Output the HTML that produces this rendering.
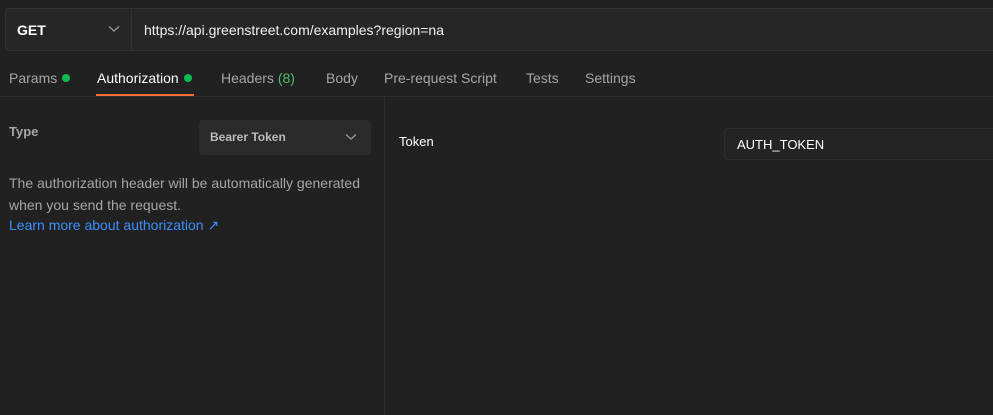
<!DOCTYPE html>
<html><head><style>
body{margin:0;width:993px;height:415px;background:#212121;font-family:"Liberation Sans",sans-serif;position:relative;overflow:hidden;color:#e6e6e6}
.a{position:absolute}
.url{left:5px;top:8px;width:1000px;height:43px;border:1px solid #333;border-radius:4px;background:#262626;box-sizing:border-box}
.tab{top:70px;font-size:14px;color:#a6a6a6}
.dot{display:inline-block;width:8px;height:8px;border-radius:50%;background:#0cbb52;margin-left:5px;vertical-align:1px}
</style></head><body>
<div class="a url"></div>
<div class="a" style="left:131px;top:9px;width:1px;height:41px;background:#333"></div>
<div class="a" style="left:17px;top:22px;font-size:14px;font-weight:bold;color:#fff">GET</div>
<svg class="a" style="left:108px;top:25px" width="12" height="8"><path d="M1 1.5L6 6L11 1.5" stroke="#999" stroke-width="1.3" fill="none"/></svg>
<div class="a" style="left:144px;top:22px;font-size:14px;color:#f0f0f0">https://api.greenstreet.com/examples?region=na</div>
<div class="a tab" style="left:9px">Params<span class="dot"></span></div>
<div class="a tab" style="left:97px;color:#fff">Authorization<span class="dot"></span></div>
<div class="a tab" style="left:221px">Headers <span style="color:#4fc068">(8)</span></div>
<div class="a tab" style="left:326px">Body</div>
<div class="a tab" style="left:384px">Pre-request Script</div>
<div class="a tab" style="left:526px">Tests</div>
<div class="a tab" style="left:585px">Settings</div>
<div class="a" style="left:96px;top:94px;width:98px;height:2px;background:#ff6c37"></div>
<div class="a" style="left:0;top:96px;width:993px;height:1px;background:#2f2f2f"></div>
<div class="a" style="left:384px;top:97px;width:1px;height:318px;background:#2f2f2f"></div>
<div class="a" style="left:9px;top:124px;font-size:13px;font-weight:bold;color:#a6a6a6">Type</div>
<div class="a" style="left:199px;top:120px;width:172px;height:35px;background:#2b2b2b;border-radius:4px"></div>
<div class="a" style="left:210px;top:130px;font-size:12px;font-weight:bold;color:#bbb">Bearer Token</div>
<svg class="a" style="left:345px;top:133px" width="12" height="8"><path d="M1 1.5L6 6L11 1.5" stroke="#999" stroke-width="1.3" fill="none"/></svg>
<div class="a" style="left:9px;top:172px;font-size:14px;line-height:22px;color:#a6a6a6;width:375px">The authorization header will be automatically generated<br>when you send the request.</div>
<div class="a" style="left:9px;top:217px;font-size:14px;color:#3d8fff">Learn more about authorization ↗</div>
<div class="a" style="left:399px;top:134px;font-size:13px;color:#fff">Token</div>
<div class="a" style="left:724px;top:128px;width:300px;height:32px;border:1px solid #2e2e2e;border-radius:4px;background:#242424;box-sizing:border-box"></div>
<div class="a" style="left:737px;top:137px;font-size:13px;color:#fff">AUTH_TOKEN</div>
</body></html>
